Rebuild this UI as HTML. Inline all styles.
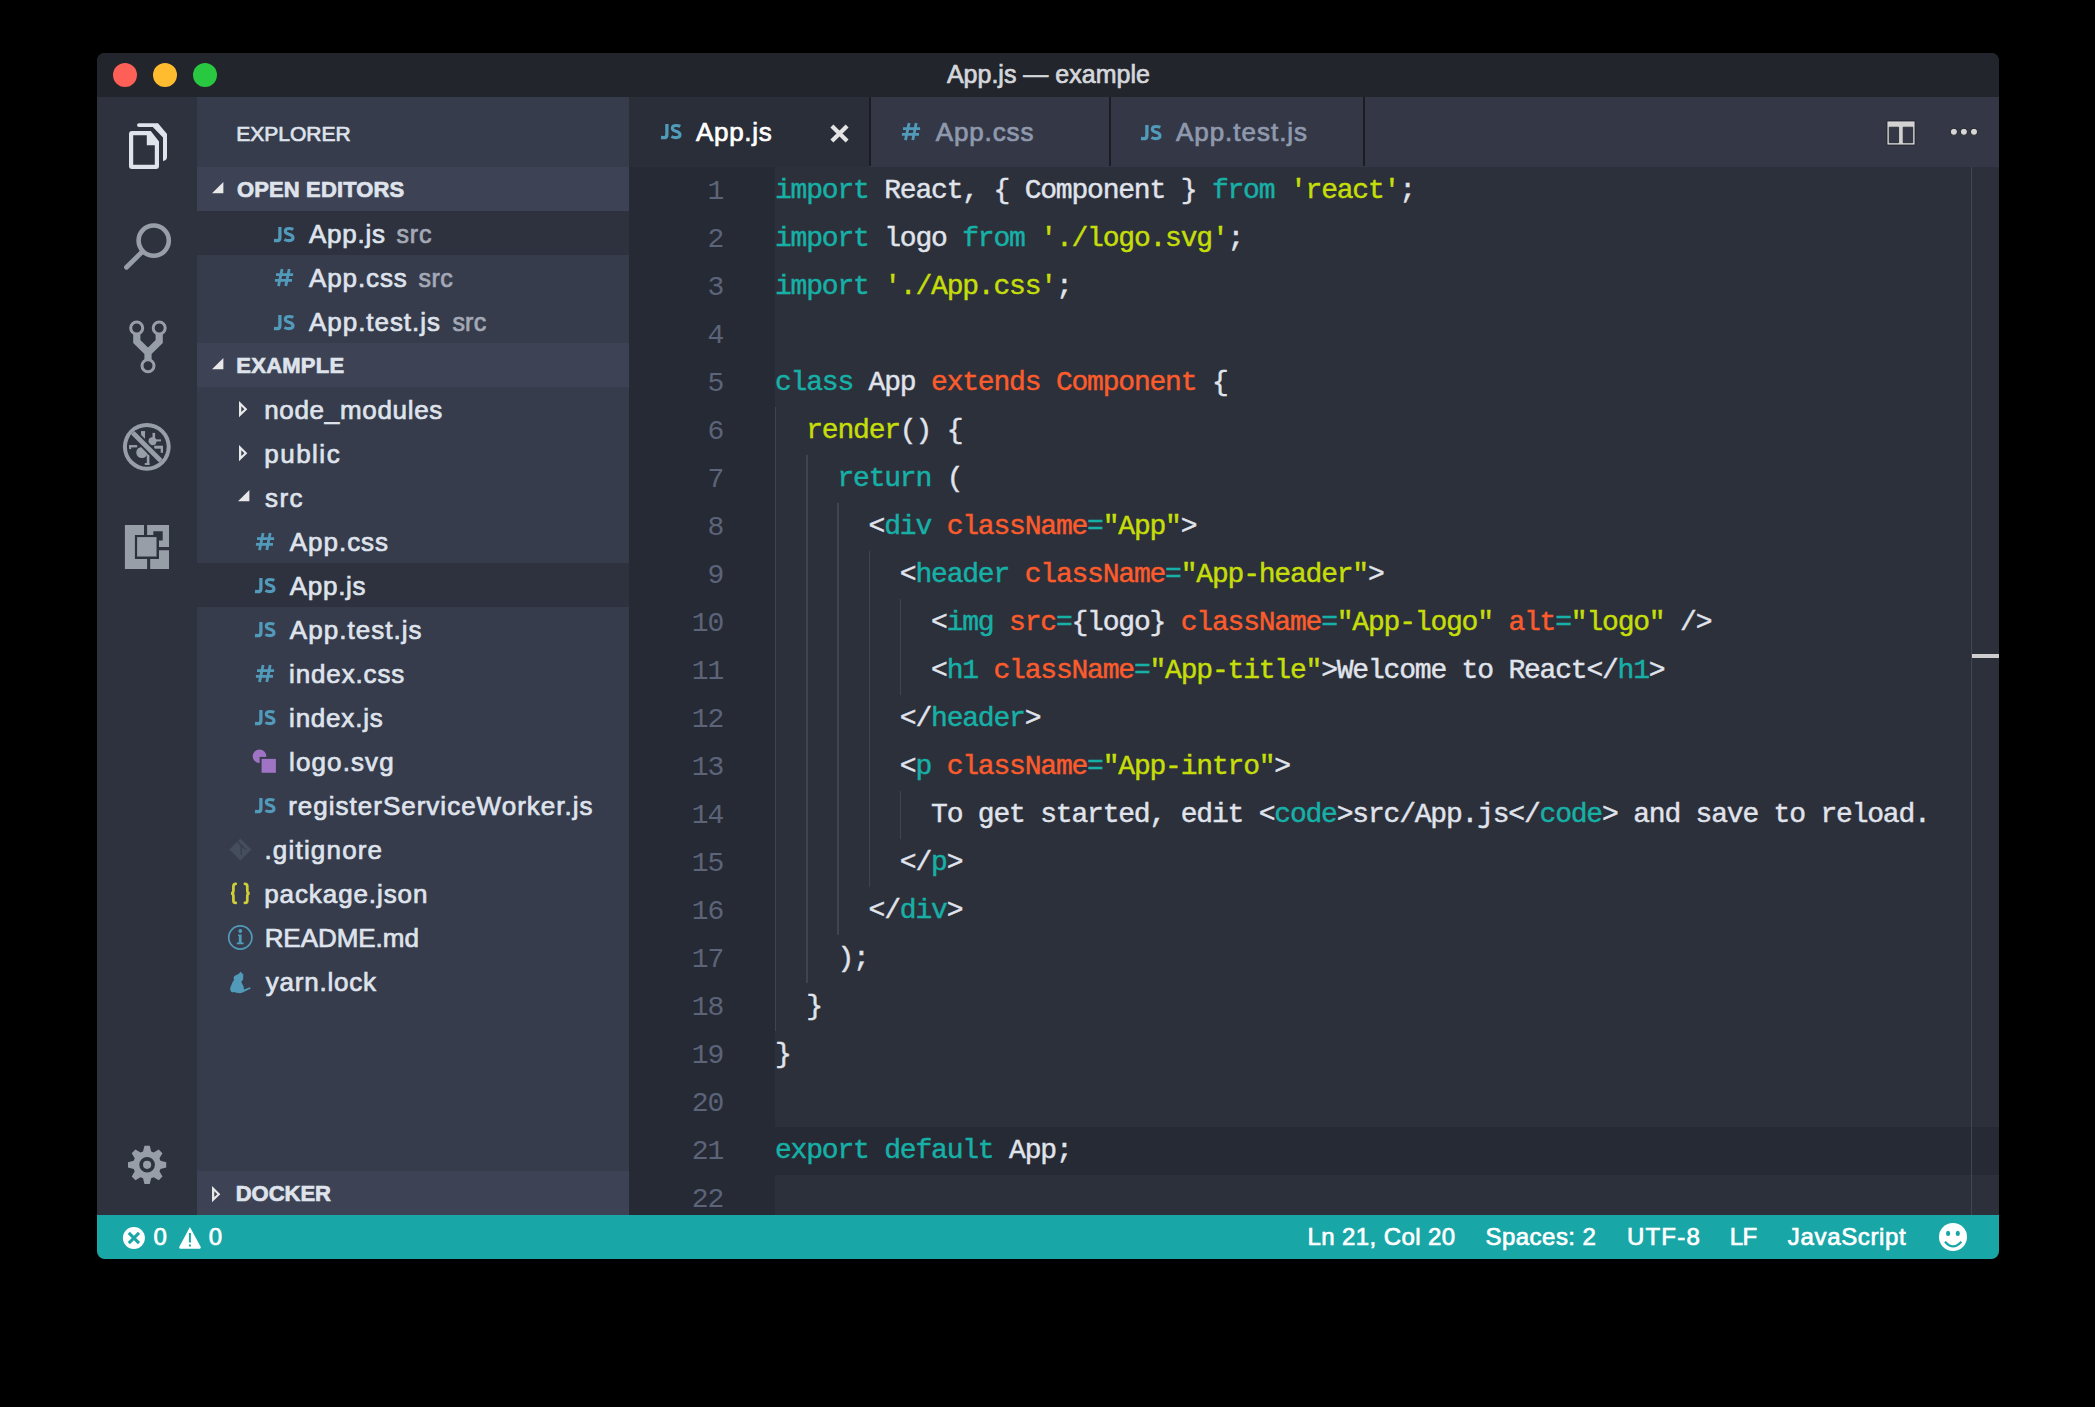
<!DOCTYPE html>
<html><head><meta charset="utf-8">
<style>
*{margin:0;padding:0;box-sizing:border-box}
html,body{width:2095px;height:1407px;background:#000000;overflow:hidden}
body{position:relative;font-family:"Liberation Sans",sans-serif}
.p{position:absolute}
.tx{position:absolute;white-space:pre;line-height:100px;height:100px;-webkit-text-stroke:0.7px currentColor}
.ic{position:absolute;overflow:visible}
.jsi{position:absolute;font-family:"Liberation Sans",sans-serif;font-weight:700;font-size:20px;line-height:30px;color:#519aba;letter-spacing:-2.4px;transform:scaleX(0.92);transform-origin:0 0}
.code{position:absolute;left:775px;top:167px;font-family:"Liberation Mono",monospace;font-size:28px;letter-spacing:-1.2px;line-height:48px;color:#e0e4ec;white-space:pre;-webkit-text-stroke:0.45px currentColor}
.lnum{position:absolute;left:629px;top:168px;width:94px;text-align:right;font-family:"Liberation Mono",monospace;font-size:28px;letter-spacing:-1.2px;line-height:48px;color:#5c6479;white-space:pre}
.k{color:#17b0a7}.s{color:#c5de0a}.o{color:#fc5c2b}
.guide{position:absolute;width:1.4px;background:#3f4452}
</style></head><body>
<div class=p style="left:97px;top:53px;width:1902px;height:1206px;border-radius:8px;overflow:hidden;background:#2c303b">
 <div class=p style="left:0;top:0;width:1902px;height:44px;background:#22252c"></div>
 <div class=p style="left:0;top:44px;width:100px;height:1118px;background:#2e323f"></div>
 <div class=p style="left:100px;top:44px;width:432px;height:1118px;background:#373c4c"></div>
 <div class=p style="left:100px;top:114px;width:432px;height:44px;background:#3d4254"></div>
 <div class=p style="left:100px;top:158px;width:432px;height:44px;background:#2e323f"></div>
 <div class=p style="left:100px;top:290px;width:432px;height:44px;background:#3d4254"></div>
 <div class=p style="left:100px;top:510px;width:432px;height:44px;background:#2e323f"></div>
 <div class=p style="left:100px;top:1118px;width:432px;height:44px;background:#3d4254"></div>
 <div class=p style="left:532px;top:44px;width:1370px;height:70px;background:#343846"></div>
 <div class=p style="left:532px;top:44px;width:240px;height:70px;background:#2a2e39"></div>
 <div class=p style="left:772px;top:44px;width:1.5px;height:69px;background:#1b1d22"></div>
 <div class=p style="left:1012px;top:44px;width:1.5px;height:69px;background:#1b1d22"></div>
 <div class=p style="left:1266px;top:44px;width:1.5px;height:69px;background:#1b1d22"></div>
 <div class=p style="left:532px;top:114px;width:146px;height:1048px;background:#262a34"></div>
 <div class=p style="left:678px;top:1074px;width:1224px;height:48px;background:#262a34"></div>
 <div class=p style="left:1874px;top:114px;width:1px;height:1048px;background:#424654"></div>
 <div class=p style="left:1875px;top:601px;width:27px;height:4px;background:#cfcfcf"></div>
 <div class=p style="left:0;top:1162px;width:1902px;height:44px;background:#19a6a7"></div>
</div>
<div class=p style="left:0;top:0;width:2095px;height:1407px">
<div class=p style="left:112.5px;top:62.8px;width:24.5px;height:24.5px;border-radius:50%;background:#fe5f57"></div>
<div class=p style="left:152.5px;top:62.8px;width:24.5px;height:24.5px;border-radius:50%;background:#febc2e"></div>
<div class=p style="left:192.5px;top:62.8px;width:24.5px;height:24.5px;border-radius:50%;background:#28c840"></div>
<div class=guide style="left:775.0px;top:407px;height:624px"></div><div class=guide style="left:806.2px;top:455px;height:528px"></div><div class=guide style="left:837.4px;top:503px;height:432px"></div><div class=guide style="left:868.6px;top:551px;height:336px"></div><div class=guide style="left:899.8px;top:599px;height:96px"></div><div class=guide style="left:899.8px;top:791px;height:48px"></div>
<div class=lnum>1
2
3
4
5
6
7
8
9
10
11
12
13
14
15
16
17
18
19
20
21
22</div>
<div class=code><span class=k>import</span> React, { Component } <span class=k>from</span> <span class=s>'react'</span>;
<span class=k>import</span> logo <span class=k>from</span> <span class=s>'./logo.svg'</span>;
<span class=k>import</span> <span class=s>'./App.css'</span>;

<span class=k>class</span> App <span class=o>extends</span> <span class=o>Component</span> {
  <span class=s>render</span>() {
    <span class=k>return</span> (
      &lt;<span class=k>div</span> <span class=o>className</span><span class=k>=</span><span class=s>"App"</span>&gt;
        &lt;<span class=k>header</span> <span class=o>className</span><span class=k>=</span><span class=s>"App-header"</span>&gt;
          &lt;<span class=k>img</span> <span class=o>src</span><span class=k>=</span>{logo} <span class=o>className</span><span class=k>=</span><span class=s>"App-logo"</span> <span class=o>alt</span><span class=k>=</span><span class=s>"logo"</span> /&gt;
          &lt;<span class=k>h1</span> <span class=o>className</span><span class=k>=</span><span class=s>"App-title"</span>&gt;Welcome to React&lt;/<span class=k>h1</span>&gt;
        &lt;/<span class=k>header</span>&gt;
        &lt;<span class=k>p</span> <span class=o>className</span><span class=k>=</span><span class=s>"App-intro"</span>&gt;
          To get started, edit &lt;<span class=k>code</span>&gt;src/App.js&lt;/<span class=k>code</span>&gt; and save to reload.
        &lt;/<span class=k>p</span>&gt;
      &lt;/<span class=k>div</span>&gt;
    );
  }
}

<span class=k>export</span> <span class=k>default</span> App;
</div>
<div class=tx style="left:946.89px;top:24.00px;font-size:25px;font-weight:400;color:#d5d7db;letter-spacing:0.009px;">App.js — example</div><div class=tx style="left:236.20px;top:84.00px;font-size:21px;font-weight:400;color:#dfe3ec;letter-spacing:0.006px;">EXPLORER</div><div class=tx style="left:237.01px;top:140.00px;font-size:22px;font-weight:700;color:#dfe3ec;letter-spacing:0.128px;">OPEN EDITORS</div><div class=tx style="left:308.99px;top:184.00px;font-size:26px;font-weight:400;color:#dfe3ec;letter-spacing:0.769px;">App.js</div><div class=tx style="left:396.42px;top:184.00px;font-size:25px;font-weight:400;color:#a3a9b6;letter-spacing:0.915px;">src</div><div class=tx style="left:309.09px;top:228.00px;font-size:26px;font-weight:400;color:#dfe3ec;letter-spacing:0.871px;">App.css</div><div class=tx style="left:418.42px;top:228.00px;font-size:25px;font-weight:400;color:#a3a9b6;letter-spacing:0.515px;">src</div><div class=tx style="left:309.09px;top:272.00px;font-size:26px;font-weight:400;color:#dfe3ec;letter-spacing:0.943px;">App.test.js</div><div class=tx style="left:452.42px;top:272.00px;font-size:25px;font-weight:400;color:#a3a9b6;letter-spacing:0.215px;">src</div><div class=tx style="left:236.35px;top:316.00px;font-size:22px;font-weight:700;color:#dfe3ec;letter-spacing:0.227px;">EXAMPLE</div><div class=tx style="left:264.17px;top:360.00px;font-size:26px;font-weight:400;color:#dfe3ec;letter-spacing:0.687px;">node_modules</div><div class=tx style="left:264.21px;top:404.00px;font-size:26px;font-weight:400;color:#dfe3ec;letter-spacing:1.502px;">public</div><div class=tx style="left:265.09px;top:448.00px;font-size:26px;font-weight:400;color:#dfe3ec;letter-spacing:1.425px;">src</div><div class=tx style="left:289.79px;top:492.00px;font-size:26px;font-weight:400;color:#dfe3ec;letter-spacing:0.971px;">App.css</div><div class=tx style="left:289.79px;top:536.00px;font-size:26px;font-weight:400;color:#dfe3ec;letter-spacing:0.709px;">App.js</div><div class=tx style="left:289.79px;top:580.00px;font-size:26px;font-weight:400;color:#dfe3ec;letter-spacing:1.033px;">App.test.js</div><div class=tx style="left:289.08px;top:624.00px;font-size:26px;font-weight:400;color:#dfe3ec;letter-spacing:0.855px;">index.css</div><div class=tx style="left:289.08px;top:668.00px;font-size:26px;font-weight:400;color:#dfe3ec;letter-spacing:0.780px;">index.js</div><div class=tx style="left:289.07px;top:712.00px;font-size:26px;font-weight:400;color:#dfe3ec;letter-spacing:1.110px;">logo.svg</div><div class=tx style="left:288.17px;top:756.00px;font-size:26px;font-weight:400;color:#dfe3ec;letter-spacing:1.003px;">registerServiceWorker.js</div><div class=tx style="left:264.46px;top:800.00px;font-size:26px;font-weight:400;color:#dfe3ec;letter-spacing:1.185px;">.gitignore</div><div class=tx style="left:264.21px;top:844.00px;font-size:26px;font-weight:400;color:#dfe3ec;letter-spacing:0.909px;">package.json</div><div class=tx style="left:264.63px;top:888.00px;font-size:26px;font-weight:400;color:#dfe3ec;letter-spacing:-0.045px;">README.md</div><div class=tx style="left:265.79px;top:932.00px;font-size:26px;font-weight:400;color:#dfe3ec;letter-spacing:0.761px;">yarn.lock</div><div class=tx style="left:235.75px;top:1144.00px;font-size:22px;font-weight:700;color:#dfe3ec;letter-spacing:-0.018px;">DOCKER</div><div class=tx style="left:695.89px;top:81.60px;font-size:26px;font-weight:400;color:#ffffff;letter-spacing:0.729px;">App.js</div><div class=tx style="left:935.69px;top:81.90px;font-size:26px;font-weight:400;color:#8f99ae;letter-spacing:0.888px;">App.css</div><div class=tx style="left:1175.89px;top:81.90px;font-size:26px;font-weight:400;color:#8f99ae;letter-spacing:0.983px;">App.test.js</div><div class=tx style="left:153.48px;top:1187.00px;font-size:24px;font-weight:400;color:#ffffff;letter-spacing:0.000px;">0</div><div class=tx style="left:208.78px;top:1187.00px;font-size:24px;font-weight:400;color:#ffffff;letter-spacing:0.000px;">0</div><div class=tx style="left:1307.57px;top:1186.50px;font-size:24px;font-weight:400;color:#ffffff;letter-spacing:0.389px;">Ln 21, Col 20</div><div class=tx style="left:1485.51px;top:1186.50px;font-size:24px;font-weight:400;color:#ffffff;letter-spacing:0.467px;">Spaces: 2</div><div class=tx style="left:1626.88px;top:1186.50px;font-size:24px;font-weight:400;color:#ffffff;letter-spacing:1.234px;">UTF-8</div><div class=tx style="left:1729.87px;top:1186.50px;font-size:24px;font-weight:400;color:#ffffff;letter-spacing:-0.792px;">LF</div><div class=tx style="left:1787.83px;top:1186.50px;font-size:24px;font-weight:400;color:#ffffff;letter-spacing:0.656px;">JavaScript</div>
<svg class=ic style="left:107px;top:107px" width="80" height="80" viewBox="0 0 80 80"><g fill="#dfe3eb">
<path fill-rule="evenodd" d="M25 24 L43.8 24 L52 34.6 L52 59 Q52 62 49 62 L25 62 Q22 62 22 59 L22 27 Q22 24 25 24 Z M26.2 28.2 L39.8 28.2 L39.8 38.2 L47.8 38.2 L47.8 57.8 L26.2 57.8 Z"/>
<path d="M32 16.2 L51 16.2 L60 27 L60 50 Q60 53.6 56 54 L56 30.4 L45.8 19.9 L32 19.9 Q30 19.9 30 18 Q30 16.2 32 16.2 Z"/></g></svg><svg class=ic style="left:107px;top:207px" width="80" height="80" viewBox="0 0 80 80"><g stroke="#989ea8" fill="none">
<circle cx="46.7" cy="33.6" r="15.1" stroke-width="4.6"/><path d="M35.5 44.5 L19.5 60.3" stroke-width="4.8" stroke-linecap="round"/></g></svg><svg class=ic style="left:107px;top:307px" width="80" height="80" viewBox="0 0 80 80"><g stroke="#989ea8" fill="none">
<circle cx="29.7" cy="21" r="6" stroke-width="3"/><circle cx="52.2" cy="21" r="6" stroke-width="3"/><circle cx="41" cy="58.8" r="6" stroke-width="3"/>
<path d="M29.8 26.5 L29.8 34.5 L41 45.5 L52.2 34.5 L52.2 26.5 M41 45.5 L41 53" stroke-width="7.2" stroke-linejoin="miter"/></g></svg><svg class=ic style="left:107px;top:407px" width="80" height="80" viewBox="0 0 80 80"><g fill="#989ea8" stroke="none">
<path fill-rule="evenodd" d="M39.8 15.9 A23.9 23.9 0 1 0 39.8 63.7 A23.9 23.9 0 1 0 39.8 15.9 Z M39.8 19.9 A19.9 19.9 0 1 1 39.8 59.7 A19.9 19.9 0 1 1 39.8 19.9 Z"/>

<path d="M34.1 24.2 L38 24.2 L38 32.3 L34.1 28.5 Z"/><rect x="34.1" y="24.2" width="4" height="2" />
<rect x="45.5" y="25.9" width="2.6" height="6"/><rect x="47.5" y="32.4" width="6.5" height="2"/>
<circle cx="45.5" cy="34.3" r="4"/>
<rect x="47.2" y="38.7" width="8.8" height="3"/><rect x="53.7" y="39.8" width="2.3" height="6"/>
<rect x="22.2" y="38.1" width="8" height="2.3"/><rect x="22.2" y="38.1" width="2" height="4"/>
<circle cx="34.9" cy="45.5" r="5.6"/>
<rect x="39.8" y="47.2" width="2.6" height="10.8"/><rect x="37.8" y="56" width="4.6" height="2"/>
</g><clipPath id="dbgc"><circle cx="39.8" cy="39.8" r="19.9"/></clipPath><path d="M20 20 L60 60" stroke="#2e323f" stroke-width="8.6" clip-path="url(#dbgc)"/><path d="M22 22 L58 58" stroke="#989ea8" stroke-width="4.6" clip-path="url(#dbgc)"/></svg><svg class=ic style="left:107px;top:507px" width="80" height="80" viewBox="0 0 80 80"><g fill="#989ea8">
<path d="M17.9 17.9 L37 17.9 L37 27.9 L27.9 27.9 L27.9 52 L40.1 52 L40.1 62 L17.9 62 Z"/>
<path d="M40.1 17.9 L62 17.9 L62 40.1 L52 40.1 L52 33.5 L55.7 33.5 L55.7 24.2 L46.3 24.2 L46.3 27.9 L40.1 27.9 Z"/>
<path d="M52 43.2 L62 43.2 L62 62 L43.2 62 L43.2 52 L52 52 Z"/>
<rect x="30.1" y="30.1" width="19.4" height="19.4"/></g></svg><svg class=ic style="left:107px;top:1125px" width="80" height="80" viewBox="0 0 80 80"><g transform="translate(40.1 39.8)">
<path fill-rule="evenodd" fill="#989ea8" d="M-4.09 -13.39 L-2.62 -19.12 L2.62 -19.12 L4.09 -13.39 L6.57 -12.36 L11.67 -15.37 L15.37 -11.67 L12.36 -6.57 L13.39 -4.09 L19.12 -2.62 L19.12 2.62 L13.39 4.09 L12.36 6.57 L15.37 11.67 L11.67 15.37 L6.57 12.36 L4.09 13.39 L2.62 19.12 L-2.62 19.12 L-4.09 13.39 L-6.57 12.36 L-11.67 15.37 L-15.37 11.67 L-12.36 6.57 L-13.39 4.09 L-19.12 2.62 L-19.12 -2.62 L-13.39 -4.09 L-12.36 -6.57 L-15.37 -11.67 L-11.67 -15.37 L-6.57 -12.36Z M0 -7.8 A7.8 7.8 0 1 0 0 7.8 A7.8 7.8 0 1 0 0 -7.8 Z"/>
<circle r="4.1" fill="#989ea8"/></g></svg><svg class=ic style="left:211.8px;top:182.2px" width="12" height="12" viewBox="0 0 12 12"><path d="M11.4 0 L11.4 11.2 L0 11.2 Z" fill="#e8e8e8"/></svg><svg class=ic style="left:212.2px;top:358.2px" width="12" height="12" viewBox="0 0 12 12"><path d="M11.4 0 L11.4 11.2 L0 11.2 Z" fill="#e8e8e8"/></svg><svg class=ic style="left:237.8px;top:490px" width="12" height="12" viewBox="0 0 12 12"><path d="M11.4 0 L11.4 11.2 L0 11.2 Z" fill="#e8e8e8"/></svg><svg class=ic style="left:238.7px;top:401px" width="10" height="17" viewBox="0 0 10 17"><path fill-rule="evenodd" d="M0 0 L8.3 8.15 L0 16.3 Z M2.3 5.2 L2.3 11.1 L5.3 8.15 Z" fill="#e8e8e8"/></svg><svg class=ic style="left:238.7px;top:445px" width="10" height="17" viewBox="0 0 10 17"><path fill-rule="evenodd" d="M0 0 L8.3 8.15 L0 16.3 Z M2.3 5.2 L2.3 11.1 L5.3 8.15 Z" fill="#e8e8e8"/></svg><svg class=ic style="left:211.7px;top:1185.6px" width="10" height="17" viewBox="0 0 10 17"><path fill-rule="evenodd" d="M0 0 L8.3 8.15 L0 16.3 Z M2.3 5.2 L2.3 11.1 L5.3 8.15 Z" fill="#e8e8e8"/></svg><svg class=ic style="left:273px;top:225.5px" width="23" height="18" viewBox="-1 -1 23 18"><g fill="none" stroke="#519aba"><path d="M5.9 0 L5.9 10.4 Q5.9 13.7 2.8 13.7 L0 13.5" stroke-width="3.3"/><path d="M19.3 2.4 Q17.6 1.5 15.1 1.5 Q11.3 1.5 11.3 4.2 Q11.3 6.3 15 7.2 Q19 8.2 19 10.8 Q19 13.6 15 13.6 Q12.3 13.6 10.4 12.5" stroke-width="3.1"/></g></svg><svg class=ic style="left:272.90px;top:266.70px" width="24" height="22" viewBox="0 0 24 22"><path d="M9.10 2.00 L5.50 19.10 M16.20 2.00 L12.80 19.10 M3.00 7.70 L20.10 7.70 M1.90 13.40 L19.00 13.40" stroke="#519aba" stroke-width="2.8" fill="none"/></svg><svg class=ic style="left:273px;top:313.5px" width="23" height="18" viewBox="-1 -1 23 18"><g fill="none" stroke="#519aba"><path d="M5.9 0 L5.9 10.4 Q5.9 13.7 2.8 13.7 L0 13.5" stroke-width="3.3"/><path d="M19.3 2.4 Q17.6 1.5 15.1 1.5 Q11.3 1.5 11.3 4.2 Q11.3 6.3 15 7.2 Q19 8.2 19 10.8 Q19 13.6 15 13.6 Q12.3 13.6 10.4 12.5" stroke-width="3.1"/></g></svg><svg class=ic style="left:253.60px;top:530.70px" width="24" height="22" viewBox="0 0 24 22"><path d="M9.10 2.00 L5.50 19.10 M16.20 2.00 L12.80 19.10 M3.00 7.70 L20.10 7.70 M1.90 13.40 L19.00 13.40" stroke="#519aba" stroke-width="2.8" fill="none"/></svg><svg class=ic style="left:253.5px;top:577px" width="23" height="18" viewBox="-1 -1 23 18"><g fill="none" stroke="#519aba"><path d="M5.9 0 L5.9 10.4 Q5.9 13.7 2.8 13.7 L0 13.5" stroke-width="3.3"/><path d="M19.3 2.4 Q17.6 1.5 15.1 1.5 Q11.3 1.5 11.3 4.2 Q11.3 6.3 15 7.2 Q19 8.2 19 10.8 Q19 13.6 15 13.6 Q12.3 13.6 10.4 12.5" stroke-width="3.1"/></g></svg><svg class=ic style="left:253.5px;top:621px" width="23" height="18" viewBox="-1 -1 23 18"><g fill="none" stroke="#519aba"><path d="M5.9 0 L5.9 10.4 Q5.9 13.7 2.8 13.7 L0 13.5" stroke-width="3.3"/><path d="M19.3 2.4 Q17.6 1.5 15.1 1.5 Q11.3 1.5 11.3 4.2 Q11.3 6.3 15 7.2 Q19 8.2 19 10.8 Q19 13.6 15 13.6 Q12.3 13.6 10.4 12.5" stroke-width="3.1"/></g></svg><svg class=ic style="left:253.60px;top:662.70px" width="24" height="22" viewBox="0 0 24 22"><path d="M9.10 2.00 L5.50 19.10 M16.20 2.00 L12.80 19.10 M3.00 7.70 L20.10 7.70 M1.90 13.40 L19.00 13.40" stroke="#519aba" stroke-width="2.8" fill="none"/></svg><svg class=ic style="left:253.5px;top:709px" width="23" height="18" viewBox="-1 -1 23 18"><g fill="none" stroke="#519aba"><path d="M5.9 0 L5.9 10.4 Q5.9 13.7 2.8 13.7 L0 13.5" stroke-width="3.3"/><path d="M19.3 2.4 Q17.6 1.5 15.1 1.5 Q11.3 1.5 11.3 4.2 Q11.3 6.3 15 7.2 Q19 8.2 19 10.8 Q19 13.6 15 13.6 Q12.3 13.6 10.4 12.5" stroke-width="3.1"/></g></svg><svg class=ic style="left:250px;top:749px" width="28" height="26" viewBox="0 0 28 26"><circle cx="9.5" cy="7.2" r="6.8" fill="#a074c4"/><rect x="9.6" y="7.9" width="18" height="18" fill="#373c4c"/><rect x="11.6" y="9.9" width="14.3" height="13.9" fill="#a074c4"/></svg><svg class=ic style="left:253.5px;top:797px" width="23" height="18" viewBox="-1 -1 23 18"><g fill="none" stroke="#519aba"><path d="M5.9 0 L5.9 10.4 Q5.9 13.7 2.8 13.7 L0 13.5" stroke-width="3.3"/><path d="M19.3 2.4 Q17.6 1.5 15.1 1.5 Q11.3 1.5 11.3 4.2 Q11.3 6.3 15 7.2 Q19 8.2 19 10.8 Q19 13.6 15 13.6 Q12.3 13.6 10.4 12.5" stroke-width="3.1"/></g></svg><svg class=ic style="left:229px;top:838px" width="23" height="23" viewBox="0 0 23 23"><g fill="#3f4f58"><path d="M11.5 0.5 L22.5 11.5 L11.5 22.5 L0.5 11.5 Z"/></g><path d="M8 6 L11.5 9.5 M11.5 9.5 L11.5 16 M11.5 9.5 L14 12" stroke="#363b4a" stroke-width="1.2" fill="none"/></svg><svg class=ic style="left:228px;top:881px" width="26" height="26" viewBox="0 0 26 26"><g stroke="#cfcf35" stroke-width="2.7" fill="none" stroke-linecap="round"><path d="M7.8 2.8 Q5.4 2.8 5.4 5.4 V9.8 Q5.4 12.35 3 12.35 Q5.4 12.35 5.4 14.9 V19.4 Q5.4 21.9 7.8 21.9"/><path d="M16.9 2.8 Q19.3 2.8 19.3 5.4 V9.8 Q19.3 12.35 21.7 12.35 Q19.3 12.35 19.3 14.9 V19.4 Q19.3 21.9 16.9 21.9"/></g></svg><svg class=ic style="left:226px;top:923px" width="30" height="30" viewBox="0 0 30 30"><circle cx="14.3" cy="14.5" r="11.6" fill="none" stroke="#519aba" stroke-width="1.7"/><circle cx="14.3" cy="8" r="1.9" fill="#519aba"/><path d="M12 11.4 H15.6 V19.6 H17.6 V21.2 H10.8 V19.6 H12.8 V13 H12 Z" fill="#519aba"/></svg><svg class=ic style="left:224px;top:966px" width="32" height="32" viewBox="0 0 32 32"><path fill="#519aba" d="M16.5 5.7 L19.3 8.4 L19.1 13.6 L17.3 15.9 L19.6 20.5 L20 23.4 L25.9 21.2 L26.8 22.5 L18.6 26.4 L15.9 27.3 L11.1 26.6 L10.2 25.7 L9.1 26.6 L6.8 25.5 L6.1 22.3 L8.4 16.4 L10 14.1 L9.6 11.4 L10.5 10 L14.8 7.7 Z"/></svg><svg class=ic style="left:224px;top:834px" width="32" height="32" viewBox="0 0 32 32"><path fill="#454e5c" d="M16.2 5 L26.8 15.5 L16.2 26 L5.5 15.5 Z"/><path d="M13.5 7.6 L17.2 11.2 L17.2 21 M17.2 11.2 L21.6 15.4" stroke="#373c4c" stroke-width="1.3" fill="none"/></svg><svg class=ic style="left:659.5px;top:123px" width="23" height="18" viewBox="-1 -1 23 18"><g fill="none" stroke="#519aba"><path d="M5.9 0 L5.9 10.4 Q5.9 13.7 2.8 13.7 L0 13.5" stroke-width="3.3"/><path d="M19.3 2.4 Q17.6 1.5 15.1 1.5 Q11.3 1.5 11.3 4.2 Q11.3 6.3 15 7.2 Q19 8.2 19 10.8 Q19 13.6 15 13.6 Q12.3 13.6 10.4 12.5" stroke-width="3.1"/></g></svg><svg class=ic style="left:899.50px;top:120.70px" width="24" height="22" viewBox="0 0 24 22"><path d="M9.10 2.00 L5.50 19.10 M16.20 2.00 L12.80 19.10 M3.00 7.70 L20.10 7.70 M1.90 13.40 L19.00 13.40" stroke="#519aba" stroke-width="2.8" fill="none"/></svg><svg class=ic style="left:1139.6px;top:123.5px" width="23" height="18" viewBox="-1 -1 23 18"><g fill="none" stroke="#519aba"><path d="M5.9 0 L5.9 10.4 Q5.9 13.7 2.8 13.7 L0 13.5" stroke-width="3.3"/><path d="M19.3 2.4 Q17.6 1.5 15.1 1.5 Q11.3 1.5 11.3 4.2 Q11.3 6.3 15 7.2 Q19 8.2 19 10.8 Q19 13.6 15 13.6 Q12.3 13.6 10.4 12.5" stroke-width="3.1"/></g></svg><svg class=ic style="left:829px;top:123px" width="21" height="21" viewBox="0 0 21 21"><path d="M2.9 2.9 L18.1 18.1 M18.1 2.9 L2.9 18.1" stroke="#e4e4e4" stroke-width="4.2"/></svg><svg class=ic style="left:1885px;top:119px" width="32" height="28" viewBox="0 0 32 28"><path fill-rule="evenodd" fill="#d2d2d2" stroke="#1f222a" stroke-width="0.8" d="M2 2 H30 V26 H2 Z M4.3 8.2 V23.7 H13.6 V8.2 Z M18.2 8.2 V23.7 H27.7 V8.2 Z"/></svg><svg class=ic style="left:1945px;top:123px" width="40" height="18" viewBox="0 0 40 18"><g fill="#d6d6d6" stroke="#1b1d22" stroke-width="1"><circle cx="8.9" cy="8.8" r="3.6"/><circle cx="18.9" cy="8.8" r="3.6"/><circle cx="29" cy="8.8" r="3.6"/></g></svg><svg class=ic style="left:120px;top:1224px" width="28" height="28" viewBox="0 0 28 28"><circle cx="13.9" cy="14" r="11" fill="#fff"/><path d="M8.8 8.9 L19 19.1 M19 8.9 L8.8 19.1" stroke="#19a6a7" stroke-width="3"/></svg><svg class=ic style="left:177px;top:1225px" width="26" height="26" viewBox="0 0 26 26"><path d="M12.9 2.1 L23.8 22 Q24 23.8 22.6 23.8 L3.4 23.8 Q2 23.8 2.2 22 Z" fill="#fff"/><path d="M12.9 8 V17.6 M12.9 19.6 V21.6" stroke="#19a6a7" stroke-width="2"/></svg><svg class=ic style="left:1936px;top:1220px" width="34" height="34" viewBox="0 0 34 34"><circle cx="17" cy="17" r="14" fill="#fff"/><ellipse cx="12.1" cy="13.4" rx="2.1" ry="2.6" fill="#19a6a7"/><ellipse cx="21.8" cy="13.4" rx="2.1" ry="2.6" fill="#19a6a7"/><path d="M9 21.8 Q17 31 25.4 21.8" stroke="#19a6a7" stroke-width="2.2" fill="none"/></svg>
</div>
</body></html>
